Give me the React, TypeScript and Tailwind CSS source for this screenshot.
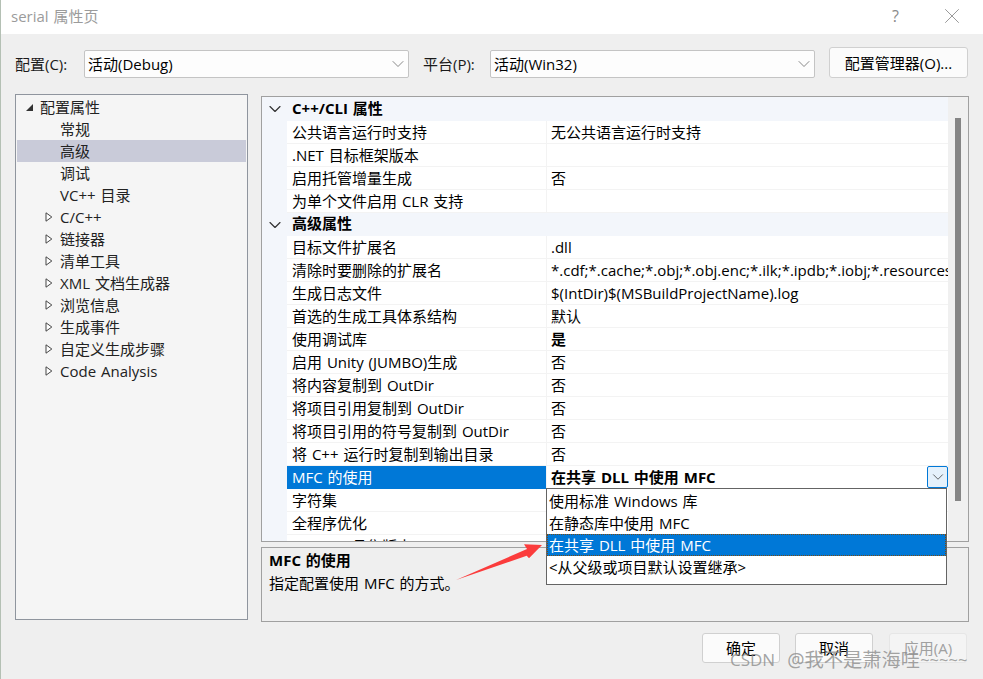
// Property page dialog -- VS project settings, MFC dropdown open.
import { ChevronDown, X } from 'lucide-react';

const FONT = "font-['Open_Sans','Noto_Sans_CJK_SC',sans-serif]";

type Row = { name: string; value?: string; bold?: boolean; selected?: boolean };

const CLI_ROWS: Row[] = [
  { name: '公共语言运行时支持', value: '无公共语言运行时支持' },
  { name: '.NET 目标框架版本' },
  { name: '启用托管增量生成', value: '否' },
  { name: '为单个文件启用 CLR 支持' },
];

const ADV_ROWS: Row[] = [
  { name: '目标文件扩展名', value: '.dll' },
  { name: '清除时要删除的扩展名', value: '*.cdf;*.cache;*.obj;*.obj.enc;*.ilk;*.ipdb;*.iobj;*.resources;*.tlb;*.tli;*.tlh' },
  { name: '生成日志文件', value: '$(IntDir)$(MSBuildProjectName).log' },
  { name: '首选的生成工具体系结构', value: '默认' },
  { name: '使用调试库', value: '是', bold: true },
  { name: '启用 Unity (JUMBO)生成', value: '否' },
  { name: '将内容复制到 OutDir', value: '否' },
  { name: '将项目引用复制到 OutDir', value: '否' },
  { name: '将项目引用的符号复制到 OutDir', value: '否' },
  { name: '将 C++ 运行时复制到输出目录', value: '否' },
  { name: 'MFC 的使用', value: '在共享 DLL 中使用 MFC', bold: true, selected: true },
  { name: '字符集' },
  { name: '全程序优化' },
  { name: 'MSVC 工具集版本' },
];

const TREE: { label: string; indent: 'root' | 'leaf' | 'closed'; selected?: boolean }[] = [
  { label: '配置属性', indent: 'root' },
  { label: '常规', indent: 'leaf' },
  { label: '高级', indent: 'leaf', selected: true },
  { label: '调试', indent: 'leaf' },
  { label: 'VC++ 目录', indent: 'leaf' },
  { label: 'C/C++', indent: 'closed' },
  { label: '链接器', indent: 'closed' },
  { label: '清单工具', indent: 'closed' },
  { label: 'XML 文档生成器', indent: 'closed' },
  { label: '浏览信息', indent: 'closed' },
  { label: '生成事件', indent: 'closed' },
  { label: '自定义生成步骤', indent: 'closed' },
  { label: 'Code Analysis', indent: 'closed' },
];

const OPTIONS = ['使用标准 Windows 库', '在静态库中使用 MFC', '在共享 DLL 中使用 MFC', '<从父级或项目默认设置继承>'];

function Combo({ value, className }: { value: string; className: string }) {
  return (
    <div className={`flex items-center justify-between h-[28px] pl-[3px] bg-[#fdfdfd] border border-[#c4c4c4] rounded-[2px] ${className}`}>
      <span>{value}</span>
      <ChevronDown className="w-[20px] h-[20px] text-[#606060]" strokeWidth={0.9} />
    </div>
  );
}

function TreeItem({ label, indent, selected }: { label: string; indent: string; selected?: boolean }) {
  return (
    <div className={`flex items-center h-[22px] ${selected ? 'bg-[#c9cbd9]' : ''}`}>
      {indent === 'root' && (
        <>
          <svg viewBox="0 0 9 9" className="w-[9px] h-[9px] ml-[8px] mr-[6px]"><path d="M8 1v7H1z" fill="#333" /></svg>
          <span className="-mt-[1px] text-[#222]">{label}</span>
        </>
      )}
      {indent === 'leaf' && <span className="-mt-[1px] ml-[43px] text-[#222]">{label}</span>}
      {indent === 'closed' && (
        <>
          <svg viewBox="0 0 8 10" className="w-[8px] h-[10px] ml-[28px] mr-[7px]"><path d="M1 .8 6.8 5 1 9.2z" fill="#fff" stroke="#444" /></svg>
          <span className="-mt-[1px] text-[#222]">{label}</span>
        </>
      )}
    </div>
  );
}

function GroupHeader({ title, height, lift }: { title: string; height: string; lift: string }) {
  return (
    <div className={`flex items-center shrink-0 bg-[#f3f6fb] ${height}`}>
      <ChevronDown className="w-[20px] h-[20px] ml-[3px] mr-[7px] text-[#333]" strokeWidth={1.4} />
      <span className={`font-bold text-black ${lift}`}>{title}</span>
    </div>
  );
}

function GridRow({ name, value, bold, selected }: Row) {
  return (
    <div className="flex h-[23px] bg-[#f3f6fb] shrink-0">
      <div className="w-[25px] shrink-0" />
      <div className={`flex items-center w-[259px] shrink-0 pl-[5px] pb-[1px] border-b ${selected ? 'bg-[#0078d7] border-[#0078d7] text-white' : 'bg-white border-[#f3f3f3] text-black'}`}>
        {name}
      </div>
      <div className="relative flex items-center flex-1 min-w-0 pl-[4px] pb-[1px] bg-white border-l border-b border-[#f3f3f3] text-black overflow-hidden">
        <span className={`whitespace-nowrap ${bold ? 'font-bold' : ''}`}>{value}</span>
        {selected && (
          <div className="absolute right-0 top-0 flex items-center justify-center w-[21px] h-[22px] bg-[#e5f1fb] border border-[#0078d7] rounded-[2px]">
            <ChevronDown className="w-[18px] h-[18px] text-[#333]" strokeWidth={1} />
          </div>
        )}
      </div>
    </div>
  );
}

function DialogButton({ label, disabled }: { label: string; disabled?: boolean }) {
  return (
    <div className={`flex items-center justify-center w-[78px] h-[30px] rounded-[3px] border ${disabled ? 'ml-px bg-[#f4f4f4] border-[#e6e6e6] text-[#a0a0a0]' : 'bg-[#fbfbfb] border-[#d0d0d0] text-black'}`}>
      {label}
    </div>
  );
}

export default function App() {
  return (
    <div className={`relative flex flex-col w-[983px] h-[679px] overflow-hidden bg-[#efefef] shadow-[inset_1px_0_0_#b4c0b4] text-[15px] leading-[22px] [word-spacing:1px] ${FONT}`}>
      {/* title bar */}
      <div className="flex items-center justify-between h-[34px] pb-[3px] pl-[10px] pr-[24px] bg-white border-l border-[#b4c0b4]">
        <span className="text-[#9b9b9b]">serial 属性页</span>
        <div className="flex items-center gap-[40px] text-[#8a8a8a]">
          <span className="text-[16px]">?</span>
          <X className="w-[26px] h-[26px] -mr-[6px]" strokeWidth={0.8} />
        </div>
      </div>

      {/* config row */}
      <div className="flex items-center h-[28px] mt-[16px] pl-[15px]">
        <span className="w-[69px] text-[#1a1a1a]">配置(C):</span>
        <Combo value="活动(Debug)" className="w-[325px]" />
        <span className="w-[81px] pl-[14px] text-[#1a1a1a]">平台(P):</span>
        <Combo value="活动(Win32)" className="w-[325px]" />
        <div className="flex items-center justify-center w-[139px] h-[31px] ml-[14px] -mt-[3px] bg-[#fbfbfb] border border-[#d0d0d0] rounded-[3px] text-black">
          配置管理器(O)...
        </div>
      </div>

      {/* body */}
      <div className="flex gap-[13px] mt-[16px] pl-[15px]">
        <div className="w-[233px] h-[526px] px-[1px] pt-[1px] bg-[#f5f5f5] border border-[#8f959e]">
          {TREE.map((t) => <TreeItem key={t.label} {...t} />)}
        </div>

        <div className="relative flex flex-col w-[708px] pt-[2px]">
          <div className="flex h-[446px] bg-[#f0f0f0] border border-[#a0a0a0] overflow-hidden">
            <div className="flex flex-col w-[686px] shrink-0">
              <GroupHeader title="C++/CLI 属性" height="h-[24px]" lift="-mt-[2px]" />
              {CLI_ROWS.map((r) => <GridRow key={r.name} {...r} />)}
              <GroupHeader title="高级属性" height="h-[23px]" lift="-mt-[4px]" />
              {ADV_ROWS.map((r) => <GridRow key={r.name} {...r} />)}
            </div>
            <div className="flex-1 pt-[21px] pl-[7px]">
              <div className="w-[6px] h-[383px] bg-[#858585]" />
            </div>
          </div>

          <div className="flex flex-col h-[75px] mt-[5px] pl-[7px] pt-[1px] bg-[#efefef] border border-[#a0a0a0] text-black">
            <span className="font-bold">MFC 的使用</span>
            <span className="mt-px">指定配置使用 MFC 的方式。</span>
          </div>

          {/* open dropdown */}
          <div className="absolute left-[285px] top-[394px] w-[401px] h-[97px] pt-px bg-white border border-[#646464]">
            {OPTIONS.map((o, i) => (
              <div key={o} className={`flex items-center h-[22px] pl-[2px] pb-[1px] ${i === 2 ? 'bg-[#0078d7] text-white outline-1 outline-dotted outline-offset-[-1px] outline-[#7a4a10]' : 'text-black'}`}>
                {o}
              </div>
            ))}
          </div>
        </div>
      </div>

      {/* footer buttons */}
      <div className="flex justify-end gap-[15px] mt-[11px] pr-[16px]">
        <DialogButton label="确定" />
        <DialogButton label="取消" />
        <DialogButton label="应用(A)" disabled />
      </div>

      {/* annotation arrow */}
      <svg className="absolute left-[450px] top-[535px] w-[100px] h-[55px]" viewBox="0 0 100 55">
        <path d="M6 45 77 14 74 9.3 92 10 79 23.3 76.7 20.7z" fill="#fb3c3c" />
      </svg>

      {/* watermark */}
      <span className="absolute left-[730px] top-[648px] flex items-center h-[24px] text-[#8c8c8c]/80 whitespace-nowrap [word-spacing:0]">
        <span className="text-[17px]">CSDN</span>
        <span className="ml-[12px] text-[19.3px]">@我不是萧海哇</span>
        <span className="text-[16.5px]">~~~~~</span>
      </span>
    </div>
  );
}
